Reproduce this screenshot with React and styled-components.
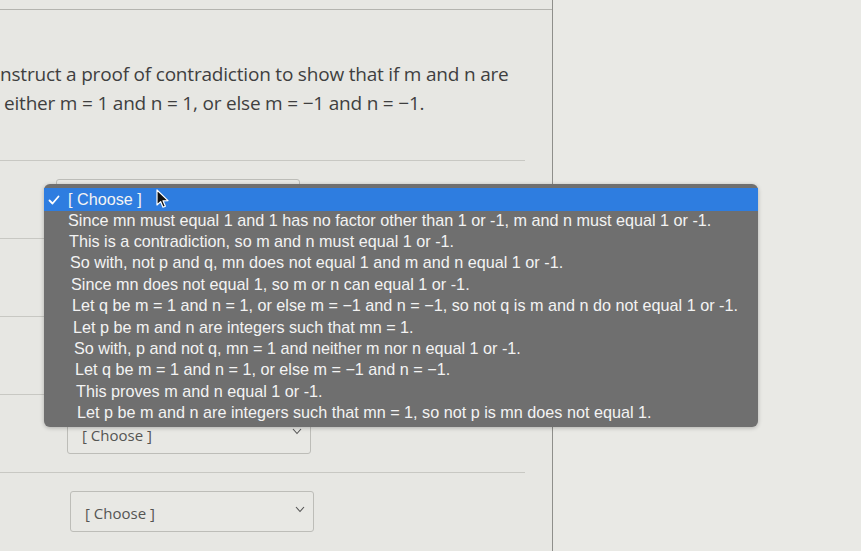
import React from "react";
import styled, { createGlobalStyle } from "styled-components";

const GlobalStyle = createGlobalStyle`
  html, body { margin: 0; padding: 0; background: #e7e7e3; }
  body { font-family: "Open Sans", "Liberation Sans", sans-serif; }
`;

const Page = styled.div`
  position: relative;
  display: flex;
  width: 861px;
  height: 551px;
  overflow: hidden;
  background: #e7e7e3;
`;

const Main = styled.div`
  width: 553px;
  flex: none;
  padding-top: 9px;
  border-right: 1px solid #8f8f8b;
  box-sizing: border-box;
`;

const Side = styled.div`
  flex: 1;
  background: #e9e9e5;
`;

const QuestionSection = styled.div`
  border-top: 1px solid #b4b4af;
  height: 151px;
  box-sizing: border-box;
  padding-top: 50px;
`;

const PromptLine = styled.div`
  font-family: "Open Sans", sans-serif;
  font-size: 19px;
  line-height: 29px;
  color: #3f3f3f;
  white-space: nowrap;
  padding-left: ${(p) => p.$indent}px;
  letter-spacing: -0.2px;
`;

const Answers = styled.div`
  width: 525px;
  display: flex;
  flex-direction: column;
`;

const AnswerRow = styled.div`
  border-top: 1px solid #c8c8c3;
  padding: 18px 0 18px ${(p) => p.$indent}px;
`;

const Select = styled.div`
  width: 244px;
  height: 41px;
  box-sizing: border-box;
  border: 1px solid #bdbdb8;
  border-radius: 3px;
  display: flex;
  align-items: center;
  justify-content: space-between;
  padding: 2px 8px 0 14px;
  font-family: "Open Sans", sans-serif;
  font-size: 15px;
  color: #555553;
  background: #e8e8e4;
`;

const Chevron = () => (
  <svg width="10" height="7" viewBox="0 0 10 7" fill="none" style={{ marginTop: -6 }}>
    <polyline points="1,1 5,5.5 9,1" stroke="#555" strokeWidth="1.1" />
  </svg>
);

const Menu = styled.div`
  position: absolute;
  left: 44px;
  top: 184px;
  width: 714px;
  padding: 4px 0;
  background: #6f6f6f;
  border-radius: 6px;
  box-shadow: 0 1px 4px rgba(0, 0, 0, 0.25);
  font-family: "Liberation Sans", Arial, sans-serif;
  font-size: 16.2px;
  color: #f3f3f3;
`;

const Option = styled.div`
  display: flex;
  align-items: center;
  height: ${(p) => (p.$selected ? 23 : 21.4)}px;
  margin-bottom: ${(p) => (p.$selected ? -1.6 : 0)}px;
  padding-left: ${(p) => p.$indent}px;
  background: ${(p) => (p.$selected ? "#2e7de0" : "transparent")};
  white-space: nowrap;
`;

const CheckSlot = styled.span`
  width: 24px;
  margin-left: -24px;
  display: inline-flex;
  align-items: center;
  padding-left: 4px;
  box-sizing: border-box;
`;

const Cursor = styled.svg`
  position: absolute;
  left: 156px;
  top: 189px;
`;

const options = [
  "Since mn must equal 1 and 1 has no factor other than 1 or -1, m and n must equal 1 or -1.",
  "This is a contradiction, so m and n must equal 1 or -1.",
  "So with, not p and q, mn does not equal 1 and m and n equal 1 or -1.",
  "Since mn does not equal 1, so m or n can equal 1 or -1.",
  "Let q be m = 1 and n = 1, or else m = \u22121 and n = \u22121, so not q is m and n do not equal 1 or -1.",
  "Let p be m and n are integers such that mn = 1.",
  "So with, p and not q, mn = 1 and neither m nor n equal 1 or -1.",
  "Let q be m = 1 and n = 1, or else m = \u22121 and n = \u22121.",
  "This proves m and n equal 1 or -1.",
  "Let p be m and n are integers such that mn = 1, so not p is mn does not equal 1.",
];

export default function App() {
  return (
    <>
      <GlobalStyle />
      <Page>
        <Main>
          <QuestionSection>
            <PromptLine $indent={0}>nstruct a proof of contradiction to show that if m and n are</PromptLine>
            <PromptLine $indent={4}>either m = 1 and n = 1, or else m = {"\u2212"}1 and n = {"\u2212"}1.</PromptLine>
          </QuestionSection>
          <Answers>
            {[56, 61, 64, 67, 70].map((ind, i) => (
              <AnswerRow key={i} $indent={ind}>
                <Select>
                  <span>[ Choose ]</span>
                  <Chevron />
                </Select>
              </AnswerRow>
            ))}
          </Answers>
        </Main>
        <Side />
        <Menu>
          <Option $selected $indent={24}>
            <CheckSlot>
              <svg width="12" height="10" viewBox="0 0 12 10" fill="none">
                <polyline points="1.5,5.5 4.5,8.5 10.5,1.5" stroke="#fff" strokeWidth="1.8" strokeLinecap="round" strokeLinejoin="round" />
              </svg>
            </CheckSlot>
            [ Choose ]
          </Option>
          {options.map((t, i) => (
            <Option key={i} $indent={24 + i}>
              {t}
            </Option>
          ))}
        </Menu>
        <Cursor width="14" height="20" viewBox="0 0 14 20">
          <path d="M1 1 L1 16 L4.6 12.6 L7 18.2 L9.4 17.2 L7 11.8 L12 11.6 Z" fill="#111" stroke="#fff" strokeWidth="1.2" strokeLinejoin="round" />
        </Cursor>
      </Page>
    </>
  );
}
